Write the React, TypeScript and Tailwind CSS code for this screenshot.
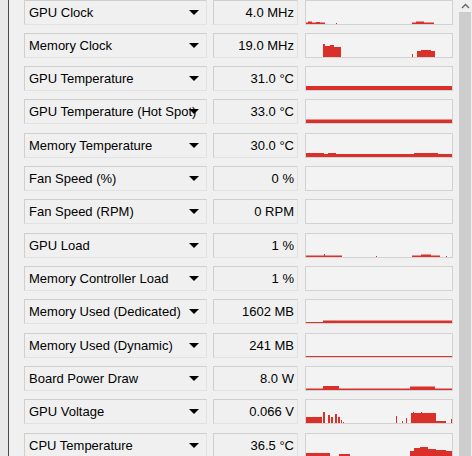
import React from "react";

type Seg = [number, number, number];

const rows: { name: string; value: string; segs: Seg[] }[] = [
  {
    name: "GPU Clock",
    value: "4.0 MHz",
    segs: [[0, 19, 1.5], [2, 6, 2.5], [10, 14, 2], [30, 31, 1], [106, 128, 1.5], [110, 118, 2.5]],
  },
  {
    name: "Memory Clock",
    value: "19.0 MHz",
    segs: [[17, 19, 13], [19, 24, 11], [24, 28, 12], [28, 35, 10], [106, 107, 3], [111, 129, 6], [115, 125, 7]],
  },
  { name: "GPU Temperature", value: "31.0 °C", segs: [[0, 146, 4]] },
  { name: "GPU Temperature (Hot Spot)", value: "33.0 °C", segs: [[0, 146, 3.5]] },
  {
    name: "Memory Temperature",
    value: "30.0 °C",
    segs: [[0, 146, 3], [0, 18, 4], [22, 30, 4], [108, 132, 4]],
  },
  { name: "Fan Speed (%)", value: "0 %", segs: [] },
  { name: "Fan Speed (RPM)", value: "0 RPM", segs: [] },
  {
    name: "GPU Load",
    value: "1 %",
    segs: [[0, 36, 1.5], [18, 19, 3], [106, 134, 1.5], [115, 125, 2.5], [70, 71, 1], [140, 141, 1]],
  },
  { name: "Memory Controller Load", value: "1 %", segs: [] },
  { name: "Memory Used (Dedicated)", value: "1602 MB", segs: [[0, 17, 1], [17, 146, 2.5]] },
  { name: "Memory Used (Dynamic)", value: "241 MB", segs: [[0, 146, 1]] },
  {
    name: "Board Power Draw",
    value: "8.0 W",
    segs: [[0, 146, 1.5], [17, 33, 4], [104, 129, 3.5]],
  },
  {
    name: "GPU Voltage",
    value: "0.066 V",
    segs: [
      [0, 16, 6], [17, 19, 11], [22, 24, 8], [25, 27, 6], [29, 31, 9], [32, 34, 6], [35, 36, 3], [37, 38, 1],
      [90, 91, 7], [96, 97, 2], [100, 101, 5], [105, 130, 10], [107, 108, 11], [115, 116, 11], [130, 140, 2], [145, 146, 4],
    ],
  },
  {
    name: "CPU Temperature",
    value: "36.5 °C",
    segs: [
      [0, 24, 4], [33, 44, 3], [104, 108, 6], [108, 114, 9], [114, 122, 10], [122, 130, 8], [130, 140, 7], [140, 146, 6],
    ],
  },
];

function Graph({ segs }: { segs: Seg[] }) {
  return (
    <svg width="146" height="23" viewBox="0 0 146 23" className="block">
      {segs.map(([x1, x2, h], i) => (
        <rect key={i} x={x1} y={23 - h} width={x2 - x1} height={h} fill="#d9302a" />
      ))}
    </svg>
  );
}

export default function App() {
  return (
    <div
      className="relative w-[472px] h-[456px] overflow-hidden bg-[#f0f0f0] flex"
      style={{ fontFamily: '"Liberation Sans", Arial, sans-serif' }}
    >
      <div className="w-[8px] h-full bg-[#e9e9e9]" />
      <div className="w-px h-full bg-[#4a4a4a]" />
      <div className="flex-1 flex flex-col pl-[15px] -mt-[0.5px]">
        {rows.map((r) => (
          <div key={r.name} className="h-[33.333px] shrink-0 flex items-start">
            <div className="relative w-[183px] h-[25px] border border-t-[#cfcfcf] border-l-[#cfcfcf] border-r-[#e2e2e2] border-b-[#e2e2e2] bg-[#f0f0f0] flex items-center pl-[4px] overflow-hidden">
              <span className="text-[13px] text-black whitespace-nowrap leading-none">{r.name}</span>
              <svg
                width="10"
                height="5"
                viewBox="0 0 10 5"
                className="absolute left-[164px] top-[9px]"
              >
                <polygon points="0,0 10,0 5,5" fill="#000" />
              </svg>
            </div>
            <div className="ml-[6px] w-[85px] h-[25px] border border-t-[#cfcfcf] border-l-[#cfcfcf] border-r-[#e2e2e2] border-b-[#e2e2e2] bg-[#f0f0f0] flex items-center justify-end pr-[3px]">
              <span className="text-[13px] text-black whitespace-nowrap leading-none">{r.value}</span>
            </div>
            <div className="ml-[7px] w-[148px] h-[25px] border border-[#d2d2d2] bg-[#f3f3f3] overflow-hidden">
              <Graph segs={r.segs} />
            </div>
          </div>
        ))}
      </div>
      <div className="w-[14px] h-full flex flex-col items-center bg-[#f0f0f0]">
        <div className="h-[12px] w-full flex items-center justify-center">
          <svg width="9" height="6" viewBox="0 0 9 6">
            <polyline points="1,5 4.5,1.5 8,5" fill="none" stroke="#606060" strokeWidth="1.3" />
          </svg>
        </div>
        <div className="flex-1 w-[12px] bg-[#cdcdcd]" />
      </div>
    </div>
  );
}
